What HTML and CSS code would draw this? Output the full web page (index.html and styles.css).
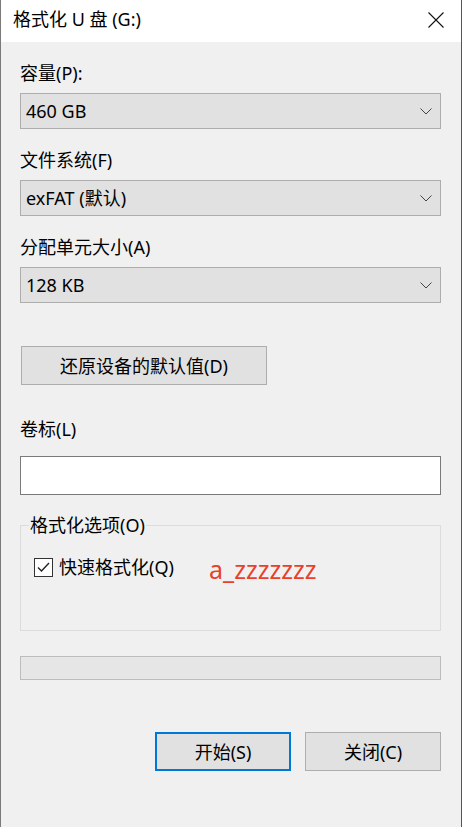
FILE: index.html
```html
<!DOCTYPE html>
<html lang="zh-CN">
<head>
<meta charset="utf-8">
<title>格式化 U 盘 (G:)</title>
<link rel="stylesheet" href="styles.css">
</head>
<body>
<div class="window">
  <div class="titlebar">
    <span class="title">格式化 U 盘 (G:)</span>
    <span class="close">
      <svg width="16" height="16" viewBox="0 0 16 16"><path d="M0.5 0.5 L15.5 15.5 M15.5 0.5 L0.5 15.5" stroke="#111" stroke-width="1.1" fill="none"/></svg>
    </span>
  </div>
  <div class="content">
    <div class="field">
      <div class="label">容量(P):</div>
      <div class="combo"><span>460 GB</span><svg class="chev" width="12" height="7" viewBox="0 0 12 7"><path d="M0.5 0.5 L6 6 L11.5 0.5" stroke="#444" stroke-width="1" fill="none"/></svg></div>
    </div>
    <div class="field">
      <div class="label">文件系统(F)</div>
      <div class="combo"><span>exFAT (默认)</span><svg class="chev" width="12" height="7" viewBox="0 0 12 7"><path d="M0.5 0.5 L6 6 L11.5 0.5" stroke="#444" stroke-width="1" fill="none"/></svg></div>
    </div>
    <div class="field">
      <div class="label">分配单元大小(A)</div>
      <div class="combo"><span>128 KB</span><svg class="chev" width="12" height="7" viewBox="0 0 12 7"><path d="M0.5 0.5 L6 6 L11.5 0.5" stroke="#444" stroke-width="1" fill="none"/></svg></div>
    </div>
    <div class="btn restore">还原设备的默认值(D)</div>
    <div class="field volume">
      <div class="label">卷标(L)</div>
      <div class="textbox"></div>
    </div>
    <fieldset class="group">
      <legend>格式化选项(O)</legend>
      <div class="option">
        <span class="checkbox"><svg width="17" height="17" viewBox="0 0 17 17"><path d="M3 8.5 L6.5 12 L14 4" stroke="#222" stroke-width="1.4" fill="none"/></svg></span>
        <span class="optlabel">快速格式化(Q)</span>
        <span class="mark">a_zzzzzzz</span>
      </div>
    </fieldset>
    <div class="progress"></div>
    <div class="actions">
      <div class="btn action primary">开始(S)</div>
      <div class="btn action">关闭(C)</div>
    </div>
  </div>
</div>
</body>
</html>
```
FILE: styles.css
```css
html, body {
  margin: 0;
  padding: 0;
}
body {
  width: 462px;
  height: 827px;
  overflow: hidden;
  background: #f0f0f0;
  font-family: "Noto Sans", "Noto Sans CJK SC", sans-serif;
  font-size: 18px;
  color: #000;
}
.window {
  box-sizing: border-box;
  width: 462px;
  height: 827px;
  border-left: 1px solid #7a7a7a;
  border-right: 1px solid #555;
  background: #f0f0f0;
  display: flex;
  flex-direction: column;
}
.titlebar {
  height: 42px;
  background: #fff;
  display: flex;
  align-items: center;
  justify-content: space-between;
  padding: 0 17px 0 12px;
}
.title {
  line-height: 24px;
  margin-top: -4px;
}
.close {
  display: flex;
  margin-top: -3px;
}
.content {
  padding: 19px 20px 0 19px;
  display: flex;
  flex-direction: column;
}
.field + .field {
  margin-top: 19px;
}
.label {
  line-height: 24px;
  height: 24px;
  margin-bottom: 8px;
}
.combo {
  box-sizing: border-box;
  height: 36px;
  background: #e1e1e1;
  border: 1px solid #adadad;
  display: flex;
  align-items: center;
  justify-content: space-between;
  padding: 0 8px 0 5px;
}
.combo span {
  line-height: 24px;
}
.chev {
  margin-top: 1px;
}
.btn {
  box-sizing: border-box;
  height: 39px;
  background: #e1e1e1;
  border: 1px solid #adadad;
  display: flex;
  align-items: center;
  justify-content: center;
  line-height: 24px;
}
.restore {
  width: 246px;
  margin: 43px 0 0 1px;
}
.field.volume {
  margin-top: 32px;
}
.volume .label {
  margin-bottom: 15px;
}
.textbox {
  box-sizing: border-box;
  height: 39px;
  background: #fff;
  border: 1px solid #7a7a7a;
}
.group {
  margin: 19px 0 0 0;
  padding: 17px 0 57px 0;
  border: 1px solid #dcdcdc;
  min-width: 0;
}
.group legend {
  margin-left: 8px;
  padding: 0 1px;
  line-height: 22px;
}
.option {
  display: grid;
  grid-template-columns: 19px 144px auto;
  column-gap: 6px;
  align-items: center;
  padding-left: 13px;
  height: 20px;
}
.checkbox {
  box-sizing: border-box;
  width: 19px;
  height: 19px;
  border: 1px solid #333;
  background: #fff;
  display: flex;
  align-items: center;
  justify-content: center;
}
.optlabel {
  line-height: 24px;
  white-space: nowrap;
}
.mark {
  color: #e8402a;
  font-size: 25px;
  line-height: 24px;
  white-space: nowrap;
  margin-top: 4px;
}
.progress {
  box-sizing: border-box;
  margin-top: 25px;
  height: 24px;
  background: #e6e6e6;
  border: 1px solid #bcbcbc;
}
.actions {
  margin-top: 52px;
  display: flex;
  justify-content: flex-end;
  gap: 14px;
}
.action {
  width: 136px;
}
.primary {
  border: 2px solid #0078d7;
}
```
